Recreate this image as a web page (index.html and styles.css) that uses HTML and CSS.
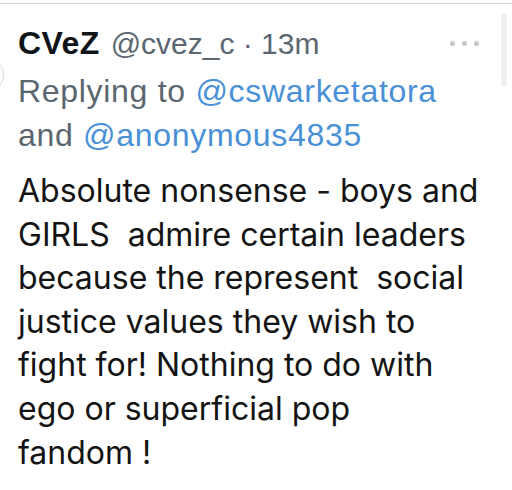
FILE: index.html
```html
<!DOCTYPE html>
<html>
<head>
<meta charset="utf-8">
<link rel="stylesheet" href="styles.css">
</head>
<body>
<div class="topline"></div>
<div class="avatar-edge"></div>
<div class="scrollbar"></div>
<div class="tweet">
  <div class="head">
    <span class="name">CVeZ</span>
    <span class="meta">@cvez_c · 13m</span>
    <span class="more"><i></i><i></i><i></i></span>
  </div>
  <div class="reply">Replying to <span class="link">@cswarketatora</span><br>and <span class="link">@anonymous4835</span></div>
  <div class="text">Absolute nonsense - boys and<br>GIRLS&nbsp; admire certain leaders<br>because the represent&nbsp; social<br>justice values they wish to<br>fight for! Nothing to do with<br>ego or superficial pop<br>fandom !</div>
</div>
</body>
</html>
```
FILE: styles.css
```css
html, body {
  margin: 0;
  padding: 0;
  background: #ffffff;
}
body {
  width: 512px;
  height: 490px;
  overflow: hidden;
  position: relative;
}
.topline {
  height: 1px;
  margin-top: 3px;
  background: #d3d3d3;
}
.avatar-edge {
  position: absolute;
  left: -30px;
  top: 58px;
  width: 34px;
  height: 34px;
  border-radius: 50%;
  border: 1px solid #d8d8d8;
  box-sizing: border-box;
}
.scrollbar {
  position: absolute;
  left: 501px;
  top: 14px;
  width: 6px;
  height: 72px;
  border-radius: 3px;
  background: #efefef;
}
.tweet {
  padding-left: 18px;
  padding-top: 15px;
}
.head {
  display: flex;
  align-items: baseline;
  font-family: "Liberation Sans", Arial, sans-serif;
  font-size: 32px;
  line-height: 48px;
  height: 48px;
}
.name {
  font-weight: bold;
  letter-spacing: 0.4px;
  color: #0f1419;
}
.meta {
  margin-left: 11px;
  font-size: 30px;
  color: #5b6670;
}
.more {
  margin-left: auto;
  margin-right: 33px;
  display: flex;
  gap: 7px;
  align-self: center;
}
.more i {
  display: block;
  width: 5px;
  height: 5px;
  border-radius: 50%;
  background: #c3c6ca;
}
.reply {
  margin-top: 2px;
  font-family: "Liberation Sans", Arial, sans-serif;
  font-size: 32px;
  letter-spacing: 0.7px;
  line-height: 44px;
  color: #5b6670;
}
.link {
  color: #4a90d6;
}
.text {
  margin-top: 12px;
  font-family: Inter, "Open Sans", sans-serif;
  font-size: 32px;
  line-height: 43.6px;
  color: #141414;
}
```
